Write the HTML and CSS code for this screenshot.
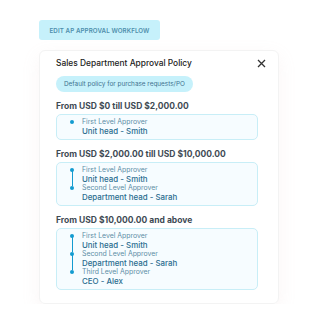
FILE: index.html
```html
<!DOCTYPE html>
<html lang="en">

<head>
    <meta charset="UTF-8" />
    <meta name="viewport" content="width=device-width, initial-scale=1.0" />
    <title>Approval Policy</title>
    <link rel="stylesheet" href="styles.css">
</head>

<body>

    <button class="edit-btn">EDIT AP APPROVAL WORKFLOW</button>

    <div class="policy-card">
        <div class="card-head">
            <h2>Sales Department Approval Policy</h2>
            <svg class="close" width="9" height="9" viewBox="0 0 9 9">
                <path d="M1 1 L8 8 M8 1 L1 8" stroke="#333" stroke-width="1.3" />
            </svg>
        </div>
        <span class="pill">Default policy for purchase requests/PO</span>

        <h3>From USD $0 till USD $2,000.00</h3>
        <div class="range-box">
            <div class="step">
                <span class="label">First Level Approver</span>
                <span class="value">Unit head - Smith</span>
            </div>
        </div>

        <h3>From USD $2,000.00 till USD $10,000.00</h3>
        <div class="range-box">
            <div class="step">
                <span class="label">First Level Approver</span>
                <span class="value">Unit head - Smith</span>
            </div>
            <div class="step">
                <span class="label">Second Level Approver</span>
                <span class="value">Department head - Sarah</span>
            </div>
        </div>

        <h3>From USD $10,000.00 and above</h3>
        <div class="range-box">
            <div class="step">
                <span class="label">First Level Approver</span>
                <span class="value">Unit head - Smith</span>
            </div>
            <div class="step">
                <span class="label">Second Level Approver</span>
                <span class="value">Department head - Sarah</span>
            </div>
            <div class="step">
                <span class="label">Third Level Approver</span>
                <span class="value">CEO - Alex</span>
            </div>
        </div>
    </div>

</body>

</html>
```

FILE: styles.css
```css
* {
    box-sizing: border-box;
}

body {
    font-family: 'Inter', 'Noto Sans', sans-serif;
    background-color: #fff;
    margin: 0;
    padding: 20px 0 0 39px;
}

.edit-btn {
    display: block;
    width: 121px;
    height: 20px;
    padding: 0;
    border: none;
    border-radius: 3px;
    background-color: #c6f1fb;
    color: #4e8eab;
    font-family: inherit;
    font-size: 6.2px;
    font-weight: 600;
    letter-spacing: 0.1px;
}

.policy-card {
    width: 240px;
    margin-top: 10px;
    padding: 5px 20px 13px 16px;
    border: 1px solid #f3f3f3;
    border-radius: 6px;
    box-shadow: 0 6px 18px rgba(210, 170, 170, 0.12);
}

.card-head {
    display: flex;
    justify-content: space-between;
    align-items: center;
    height: 14px;
}

h2 {
    margin: 0;
    font-size: 8.4px;
    font-weight: 500;
    color: #222;
}

.close {
    margin-right: -8px;
}

.pill {
    display: inline-block;
    margin-top: 5px;
    padding: 0 8px;
    height: 16px;
    line-height: 16px;
    border-radius: 8px;
    background-color: #c6f1fb;
    color: #3f7390;
    font-size: 6.4px;
}

h3 {
    margin: 8px 0 2px;
    height: 12px;
    line-height: 12px;
    font-size: 8.5px;
    font-weight: 700;
    color: #3e4a54;
}

.range-box {
    display: flex;
    flex-direction: column;
    padding: 3px 10px 3px 25px;
    border: 1px solid #c8eef7;
    border-radius: 5px;
    background-color: #f6fcff;
}

.step {
    position: relative;
    display: flex;
    flex-direction: column;
}

.step::before {
    content: "";
    position: absolute;
    left: -12px;
    top: 2px;
    width: 4px;
    height: 4px;
    border-radius: 50%;
    background-color: #139bd0;
}

.step + .step::after {
    content: "";
    position: absolute;
    left: -10.5px;
    top: -14px;
    width: 1px;
    height: 16px;
    background-color: #139bd0;
}

.label {
    height: 8px;
    line-height: 8px;
    font-size: 6.9px;
    color: #5d8ea6;
}

.value {
    height: 10px;
    line-height: 10px;
    font-size: 7.9px;
    font-weight: 500;
    color: #2a6d8f;
}
```
